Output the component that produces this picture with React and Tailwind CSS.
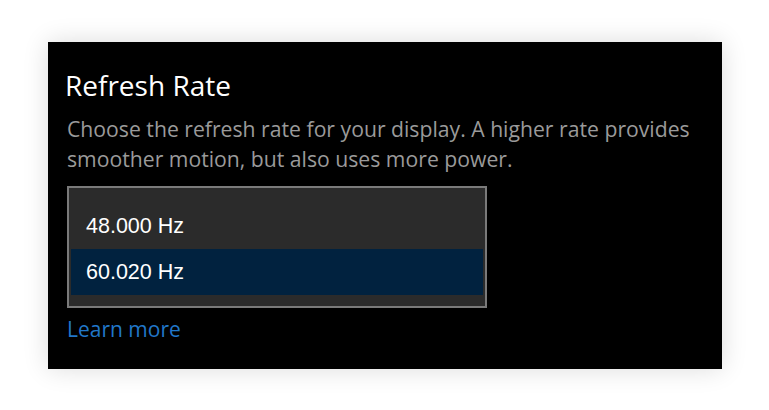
import React from 'react';

const rates = [
  { label: '48.000 Hz', selected: false },
  { label: '60.020 Hz', selected: true },
];

const RateOption = ({ label, selected }) => (
  <div
    className={`h-[46px] flex items-center pl-[15px] text-white text-[21.5px] ${
      selected ? 'bg-[#01223f]' : ''
    }`}
    style={{ fontFamily: '"Liberation Sans", Arial, sans-serif' }}
  >
    {label}
  </div>
);

export default function App() {
  return (
    <div className="w-[769px] h-[410px] bg-white pt-[42px] pl-[48px]">
      <div
        className="w-[674px] h-[327px] bg-black pt-[25px] pl-[17px] shadow-[0_0_24px_rgba(0,0,0,0.14)]"
        style={{ fontFamily: '"Open Sans", "Noto Sans", sans-serif' }}
      >
        <h1 className="text-[28px] leading-[36px] text-white">Refresh Rate</h1>
        <p className="mt-[11px] pl-[2px] text-[21.2px] leading-[30px] text-[#9a9a9a]">
          Choose the refresh rate for your display. A higher rate provides
          <br />
          smoother motion, but also uses more power.
        </p>
        <div className="mt-[12px] ml-[2px] w-[420px] h-[122px] border-2 border-[#7a7a7a] bg-[#2b2b2b] pt-[15px] pb-[11px] px-[2px]">
          {rates.map((r) => (
            <RateOption key={r.label} {...r} />
          ))}
        </div>
        <a className="block mt-[6px] pl-[2px] text-[21px] leading-[30px] text-[#2177c9]">Learn more</a>
      </div>
    </div>
  );
}
